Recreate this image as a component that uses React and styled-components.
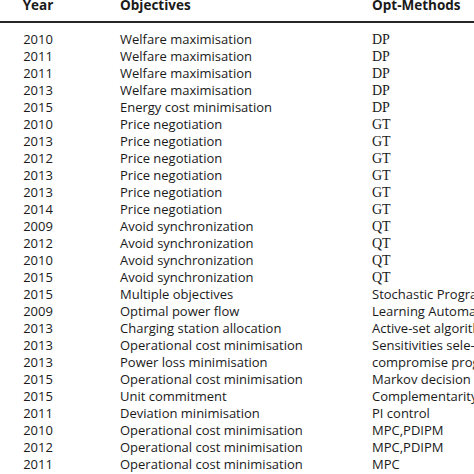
import styled, { createGlobalStyle } from "styled-components";

const GlobalStyle = createGlobalStyle`
  html, body {
    margin: 0;
    padding: 0;
    background: #fff;
    overflow: hidden;
  }
  body {
    width: 474px;
    height: 474px;
  }
`;

const Table = styled.div`
  margin-top: -5px;
  width: 620px;
  color: #1a1a1a;
  font-family: "Open Sans", "DejaVu Sans", sans-serif;
  font-size: 13px;
`;

const Row = styled.div`
  display: grid;
  grid-template-columns: 76px 208px max-content;
  column-gap: 44px;
  height: 17px;
  line-height: 17px;
  white-space: nowrap;
`;

const HeadRow = styled(Row)`
  height: 26px;
  line-height: 21px;
  font-weight: 700;
  font-size: 13.5px;
  border-bottom: 2px solid #262626;
`;

const Body = styled.div`
  padding-top: 8px;
`;

const Cell = styled.div`
  text-align: ${({ $center }) => ($center ? "center" : "left")};
  font-family: ${({ $serif }) =>
    $serif ? '"Liberation Serif", "DejaVu Serif", serif' : "inherit"};
  font-size: ${({ $serif }) => ($serif ? "14px" : "inherit")};
`;

const rows = [
  ["2010", "Welfare maximisation", "DP"],
  ["2011", "Welfare maximisation", "DP"],
  ["2011", "Welfare maximisation", "DP"],
  ["2013", "Welfare maximisation", "DP"],
  ["2015", "Energy cost minimisation", "DP"],
  ["2010", "Price negotiation", "GT"],
  ["2013", "Price negotiation", "GT"],
  ["2012", "Price negotiation", "GT"],
  ["2013", "Price negotiation", "GT"],
  ["2013", "Price negotiation", "GT"],
  ["2014", "Price negotiation", "GT"],
  ["2009", "Avoid synchronization", "QT"],
  ["2012", "Avoid synchronization", "QT"],
  ["2010", "Avoid synchronization", "QT"],
  ["2015", "Avoid synchronization", "QT"],
  ["2015", "Multiple objectives", "Stochastic Programming"],
  ["2009", "Optimal power flow", "Learning Automata"],
  ["2013", "Charging station allocation", "Active-set algorithm"],
  ["2013", "Operational cost minimisation", "Sensitivities sele-"],
  ["2013", "Power loss minimisation", "compromise programming"],
  ["2015", "Operational cost minimisation", "Markov decision process"],
  ["2015", "Unit commitment", "Complementarity"],
  ["2011", "Deviation minimisation", "PI control"],
  ["2010", "Operational cost minimisation", "MPC,PDIPM"],
  ["2012", "Operational cost minimisation", "MPC,PDIPM"],
  ["2011", "Operational cost minimisation", "MPC"],
];

const serifMethods = ["DP", "GT", "QT"];

export default function App() {
  return (
    <>
      <GlobalStyle />
      <Table>
        <HeadRow>
          <Cell $center>Year</Cell>
          <Cell>Objectives</Cell>
          <Cell>Opt-Methods</Cell>
        </HeadRow>
        <Body>
          {rows.map(([year, objective, method], i) => (
            <Row key={i}>
              <Cell $center>{year}</Cell>
              <Cell>{objective}</Cell>
              <Cell $serif={serifMethods.includes(method)}>{method}</Cell>
            </Row>
          ))}
        </Body>
      </Table>
    </>
  );
}
